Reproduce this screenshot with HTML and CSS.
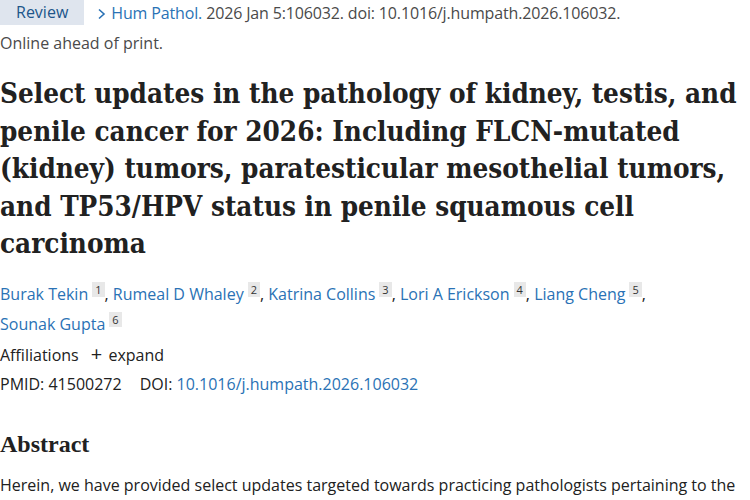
FILE: index.html
```html
<!DOCTYPE html>
<html>
<head>
<meta charset="utf-8">
<link rel="stylesheet" href="styles.css">
</head>
<body>
<main class="page">
  <div class="cite-row">
    <span class="badge">Review</span>
    <span class="cite"><svg class="chev" width="9" height="12" viewBox="0 0 9 12"><path d="M2 1.5 L7 6 L2 10.5" fill="none" stroke="#2a72b5" stroke-width="1.6"/></svg> <a class="link" href="#">Hum Pathol.</a> 2026 Jan 5:106032. doi: 10.1016/j.humpath.2026.106032.</span>
  </div>
  <div class="ahead">Online ahead of print.</div>
  <h1 class="title">Select updates in the pathology of kidney, testis, and penile cancer for 2026: Including FLCN-mutated (kidney) tumors, paratesticular mesothelial tumors, and TP53/HPV status in penile squamous cell carcinoma</h1>
  <div class="authors">
    <a class="link" href="#">Burak Tekin</a><sup class="aff">1</sup>, <a class="link" href="#">Rumeal D Whaley</a><sup class="aff">2</sup>, <a class="link" href="#">Katrina Collins</a><sup class="aff">3</sup>, <a class="link" href="#">Lori A Erickson</a><sup class="aff">4</sup>, <a class="link" href="#">Liang Cheng</a><sup class="aff">5</sup>,<br><a class="link" href="#">Sounak Gupta</a><sup class="aff">6</sup>
  </div>
  <div class="affil">Affiliations <span class="plus">+</span> expand</div>
  <div class="ids"><span>PMID: 41500272</span><span>DOI: <a class="link" href="#">10.1016/j.humpath.2026.106032</a></span></div>
  <h2 class="abs-h">Abstract</h2>
  <p class="abs">Herein, we have provided select updates targeted towards practicing pathologists pertaining to the</p>
</main>
</body>
</html>
```
FILE: styles.css
```css
html, body { margin: 0; padding: 0; background: #fff; }
body { font-family: "Open Sans", "Noto Sans", sans-serif; color: #212121; font-size: 16px; }
.page { padding: 0; }
.link { color: #2a72b5; text-decoration: none; }
.cite-row { display: flex; align-items: center; gap: 13px; height: 25px; }
.badge { background: #dfe5ee; color: #20558a; padding: 0 16px; height: 25px; line-height: 25px; display: inline-block; }
.cite { color: #4a4a4a; letter-spacing: -0.15px; }
.chev { vertical-align: -1px; margin-right: 1px; }
.ahead { color: #4a4a4a; margin-top: 7px; }
.title { font-family: "DejaVu Serif", serif; font-stretch: condensed; font-weight: bold; font-size: 27.6px; line-height: 37.5px; margin: 21px 0 0; color: #212121; }
.authors { margin-top: 14px; line-height: 25px; }
.aff { font-size: 11px; background: #e8e8e8; color: #333; padding: 0 3px; margin-left: 4px; }
.affil { margin-top: 7px; }
.plus { margin: 0 2px 0 8px; font-size: 20px; line-height: 1; }
.ids { margin-top: 7px; display: flex; gap: 18px; }
.abs-h { font-family: "Liberation Serif", serif; font-weight: bold; font-size: 24px; margin: 36px 0 0; }
.abs { margin: 16px 0 0; }
```
